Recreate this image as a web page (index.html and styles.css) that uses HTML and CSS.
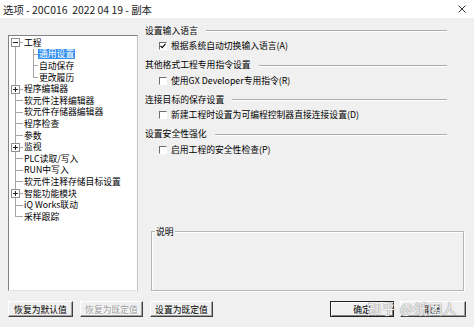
FILE: index.html
```html
<!DOCTYPE html>
<html lang="zh-CN">
<head>
  <meta charset="UTF-8">
  <title>选项</title>
  <link rel="stylesheet" href="styles.css">
</head>
<body>
  <div class="titlebar">
    <span>选项 - 20C016 &nbsp;2022 04 19 - 副本</span>
    <svg class="close" width="8" height="8" viewBox="0 0 8 8"><path d="M0.5 0.5 L7.5 7.5 M7.5 0.5 L0.5 7.5" stroke="#333" stroke-width="1"/></svg>
  </div>

  <div class="main">
    <div class="tree">
      <div class="node first"><span class="trunk"><i class="box"></i></span><span class="label">工程</span></div>
      <div class="node sub"><span class="trunk"></span><span class="branch"></span><span class="label sel">通用设置</span></div>
      <div class="node sub"><span class="trunk"></span><span class="branch"></span><span class="label">自动保存</span></div>
      <div class="node sub"><span class="trunk"></span><span class="branch end"></span><span class="label">更改履历</span></div>
      <div class="node"><span class="trunk"><i class="box plus"></i></span><span class="label">程序编辑器</span></div>
      <div class="node"><span class="trunk"></span><span class="label">软元件注释编辑器</span></div>
      <div class="node"><span class="trunk"></span><span class="label">软元件存储器编辑器</span></div>
      <div class="node"><span class="trunk"></span><span class="label">程序检查</span></div>
      <div class="node"><span class="trunk"></span><span class="label">参数</span></div>
      <div class="node"><span class="trunk"><i class="box plus"></i></span><span class="label">监视</span></div>
      <div class="node"><span class="trunk"></span><span class="label">PLC读取/写入</span></div>
      <div class="node"><span class="trunk"></span><span class="label">RUN中写入</span></div>
      <div class="node"><span class="trunk"></span><span class="label">软元件注释存储目标设置</span></div>
      <div class="node"><span class="trunk"><i class="box plus"></i></span><span class="label">智能功能模块</span></div>
      <div class="node"><span class="trunk"></span><span class="label">iQ Works联动</span></div>
      <div class="node last"><span class="trunk"></span><span class="label">采样跟踪</span></div>
    </div>

    <div class="panel">
      <div class="sec">
        <div class="sec-head"><span>设置输入语言</span><span class="rule"></span></div>
        <div class="check-row">
          <span class="cb"><svg width="6" height="6" viewBox="0 0 6 6"><path d="M0.5 2.8 L2.2 4.6 L5.6 0.9" fill="none" stroke="#000" stroke-width="1.2"/></svg></span>
          <span>根据系统自动切换输入语言(A)</span>
        </div>
      </div>
      <div class="sec">
        <div class="sec-head"><span>其他格式工程专用指令设置</span><span class="rule"></span></div>
        <div class="check-row"><span class="cb"></span><span>使用GX Developer专用指令(R)</span></div>
      </div>
      <div class="sec">
        <div class="sec-head"><span>连接目标的保存设置</span><span class="rule"></span></div>
        <div class="check-row"><span class="cb"></span><span>新建工程时设置为可编程控制器直接连接设置(D)</span></div>
      </div>
      <div class="sec">
        <div class="sec-head"><span>设置安全性强化</span><span class="rule"></span></div>
        <div class="check-row"><span class="cb"></span><span>启用工程的安全性检查(P)</span></div>
      </div>

      <div class="group">
        <div class="cap">说明</div>
      </div>
    </div>
  </div>

  <div class="buttons">
    <button class="btn w65">恢复为默认值</button>
    <button class="btn w63 dis">恢复为既定值</button>
    <button class="btn w63">设置为既定值</button>
    <button class="btn w64 def push">确定</button>
    <button class="btn w66">取消</button>
  </div>

  <div class="watermark">知乎 @纸团人</div>
</body>
</html>
```

FILE: styles.css
```css
* { box-sizing: border-box; }
body { margin: 0; width: 474px; height: 327px; overflow: hidden; position: relative; background: #f0f0f0; color: #000; font-family: "Noto Sans CJK SC", "Noto Sans", sans-serif; font-size: 8.8px; }

.titlebar { height: 18px; background: #fff; display: flex; align-items: center; justify-content: space-between; padding: 0 8px 0 3px; font-size: 10.4px; color: #1a1a1a; }

.main { display: flex; height: 273px; padding: 0 8px; }

/* tree view */
.tree { flex: none; width: 130px; margin-top: 17px; background: #fff; border: 1px solid; border-color: #828282 #c4c4c4 #e2e2e2 #828282; padding-top: 1px; }
.node { display: flex; align-items: center; height: 11.6px; line-height: 11.6px; white-space: nowrap; }
.trunk { flex: none; width: 14px; height: 100%; display: flex; align-items: center;
  background: linear-gradient(#a5a5a5, #a5a5a5) 6px 0 / 1px 100% no-repeat,
              linear-gradient(#a5a5a5, #a5a5a5) 6px 50% / 8px 1px no-repeat; }
.first .trunk { background: linear-gradient(#a5a5a5, #a5a5a5) 6px 100% / 1px 50% no-repeat,
                            linear-gradient(#a5a5a5, #a5a5a5) 6px 50% / 8px 1px no-repeat; }
.last .trunk { background: linear-gradient(#a5a5a5, #a5a5a5) 6px 0 / 1px 50% no-repeat,
                           linear-gradient(#a5a5a5, #a5a5a5) 6px 50% / 8px 1px no-repeat; }
.sub .trunk { background: linear-gradient(#a5a5a5, #a5a5a5) 6px 0 / 1px 100% no-repeat; }
.branch { flex: none; width: 15px; height: 100%;
  background: linear-gradient(#a5a5a5, #a5a5a5) 10px 0 / 1px 100% no-repeat,
              linear-gradient(#a5a5a5, #a5a5a5) 10px 50% / 5px 1px no-repeat; }
.branch.end { background: linear-gradient(#a5a5a5, #a5a5a5) 10px 0 / 1px 50% no-repeat,
                          linear-gradient(#a5a5a5, #a5a5a5) 10px 50% / 5px 1px no-repeat; }
.box { display: block; width: 9px; height: 9px; margin-left: 2px; border: 1px solid #8f8f8f;
  background: linear-gradient(#222, #222) center / 5px 1px no-repeat, #fff; }
.box.plus { background: linear-gradient(#222, #222) center / 5px 1px no-repeat,
                        linear-gradient(#222, #222) center / 1px 5px no-repeat, #fff; }
.label { padding: 0 1px; line-height: 10px; }
.label.sel { background: #3390f0; color: #fff; }

/* right panel */
.panel { flex: 1; margin-left: 7px; display: flex; flex-direction: column; padding-top: 6.5px; }
.sec + .sec { margin-top: 7px; }
.sec-head { display: flex; align-items: center; height: 12px; line-height: 12px; }
.rule { flex: 1; height: 1px; background: #ababab; box-shadow: 0 1px 0 #fff; margin: 0 19px 0 8px; }
.check-row { display: flex; align-items: center; height: 12px; line-height: 12px; margin-top: 3.5px; padding-left: 14px; }
.cb { flex: none; width: 8px; height: 8px; margin-right: 4px; border: 1px solid; border-color: #6d6d6d #fff #fff #6d6d6d; background: #fff; display: flex; align-items: center; justify-content: center; }
.cb svg { display: block; }

.group { margin: auto 2px 0 6px; height: 60px; border: 1px solid #b5b5b5; box-shadow: inset 1px 1px #fff, 1px 1px #fff; }
.cap { width: fit-content; margin: -6px 0 0 3px; padding: 0 1px; line-height: 11px; background: #f0f0f0; }

/* buttons */
.buttons { display: flex; gap: 7px; height: 16px; margin-top: 10px; padding: 0 8px; }
.btn { height: 16px; padding: 0; font: inherit; color: #000; background: #f0f0f0; border: 1px solid; border-color: #fff #404040 #404040 #fff; box-shadow: inset -1px -1px #a0a0a0; line-height: 13px; }
.w63 { width: 63px; } .w64 { width: 64px; } .w65 { width: 65px; } .w66 { width: 66px; }
.btn.dis { color: #a0a0a0; text-shadow: 1px 1px #fff; }
.btn.def { border-color: #202020; box-shadow: inset 1px 1px #fff, inset -1px -1px #808080; }
.btn.push { margin-left: auto; margin-right: -1px; }

.watermark { position: absolute; left: 367px; top: 299px; font-size: 14px; line-height: 18px; letter-spacing: 0.5px; color: rgba(255, 255, 255, 0.9); text-shadow: 0 0 1px #8a8a8a, 0 0 1px #8a8a8a; }
```
